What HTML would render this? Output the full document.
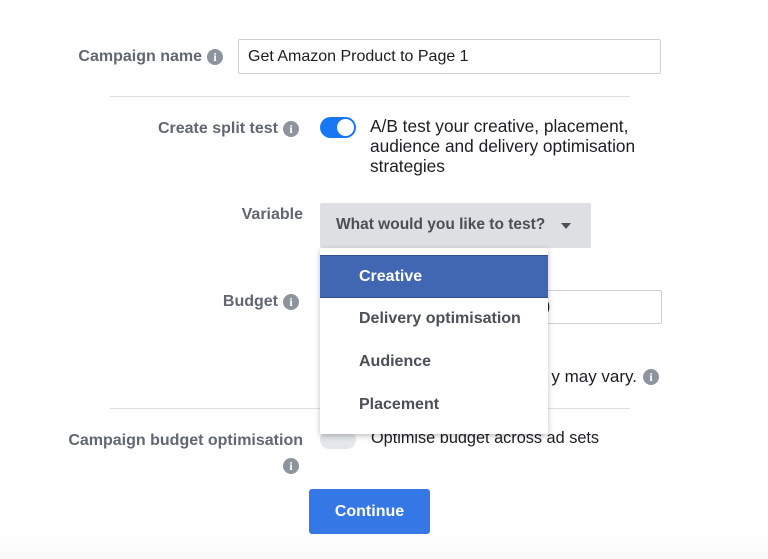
<!DOCTYPE html>
<html><head><style>
body{margin:0;width:768px;height:559px;background:#fff;position:relative;overflow:hidden;font-family:"Liberation Sans",Arial,sans-serif;}
.a{position:absolute;white-space:nowrap}
.lbl{font-weight:bold;font-size:16px;color:#606770;text-align:right}
.i{position:absolute;width:16px;height:16px;border-radius:50%;background:#8d949e;color:#fff;font:bold 12px/16px "Liberation Serif",serif;text-align:center}
.t{font-size:16px;color:#1c1e21}
.hr{position:absolute;height:1px;background:#dddfe2;left:110px;width:520px}
.it{position:absolute;left:0;width:228px;height:42px;font-weight:bold;font-size:16px;color:#4b4f56;line-height:42px;text-indent:39px}
</style></head><body>
<div class="a" style="left:0;top:535px;width:768px;height:24px;background:linear-gradient(#fff,#f9f9f9)"></div>
<div class="a lbl" style="right:566px;top:48px">Campaign name</div>
<div class="i" style="left:207px;top:49px">i</div>
<div class="a" style="left:238px;top:39px;width:421px;height:33px;border:1px solid #ccd0d5;border-radius:2px"></div>
<div class="a t" style="left:248px;top:48px;font-size:16px">Get Amazon Product to Page 1</div>
<div class="hr" style="top:96px"></div>

<div class="a lbl" style="right:490px;top:120px">Create split test</div>
<div class="i" style="left:283px;top:121px">i</div>
<div class="a" style="left:320px;top:117px;width:36px;height:21px;border-radius:11px;background:#1877f2"></div>
<div class="a" style="left:337px;top:119px;width:17px;height:17px;border-radius:50%;background:#fff"></div>
<div class="a t" style="left:370px;top:116px;line-height:20px;font-size:17.3px">A/B test your creative, placement,<br>audience and delivery optimisation<br>strategies</div>

<div class="a lbl" style="right:465px;top:206px">Variable</div>
<div class="a" style="left:320px;top:203px;width:271px;height:45px;background:#dddfe2;border-radius:2px"></div>
<div class="a" style="left:336px;top:216px;font-weight:bold;font-size:15.5px;color:#4b4f56">What would you like to test?</div>
<div class="a" style="left:561px;top:223px;width:0;height:0;border-left:5px solid transparent;border-right:5px solid transparent;border-top:6px solid #4b4f56"></div>

<div class="a lbl" style="right:490px;top:293px">Budget</div>
<div class="i" style="left:283px;top:294px">i</div>
<div class="a" style="left:540px;top:290px;width:120px;height:32px;border:1px solid #ccd0d5;border-radius:2px"></div>
<div class="a t" style="left:545px;top:298px">)</div>
<div class="a t" style="right:131px;top:367px;font-size:17px">y may vary.</div>
<div class="i" style="left:643px;top:369px">i</div>
<div class="hr" style="top:408px"></div>

<div class="a lbl" style="right:465px;top:432px">Campaign budget optimisation</div>
<div class="i" style="left:283px;top:458px">i</div>
<div class="a" style="left:320px;top:430px;width:36px;height:19px;border-radius:10px;background:#e4e6eb"></div>
<div class="a t" style="left:371px;top:429px;font-size:16.3px">Optimise budget across ad sets</div>

<div class="a" style="left:320px;top:248px;width:228px;height:186px;background:#fff;box-shadow:0 2px 6px rgba(0,0,0,.25);border-radius:2px">
<div class="it" style="top:7px;background:#4267b2;color:#fff;border-top:1px solid #30508f;border-bottom:1px solid #30508f;height:41px">Creative</div>
<div class="it" style="top:50px">Delivery optimisation</div>
<div class="it" style="top:93px">Audience</div>
<div class="it" style="top:136px">Placement</div>
</div>

<div class="a" style="left:309px;top:489px;width:121px;height:45px;background:#3578e5;border-radius:3px;color:#fff;font-weight:bold;font-size:16px;line-height:45px;text-align:center">Continue</div>
</body></html>
